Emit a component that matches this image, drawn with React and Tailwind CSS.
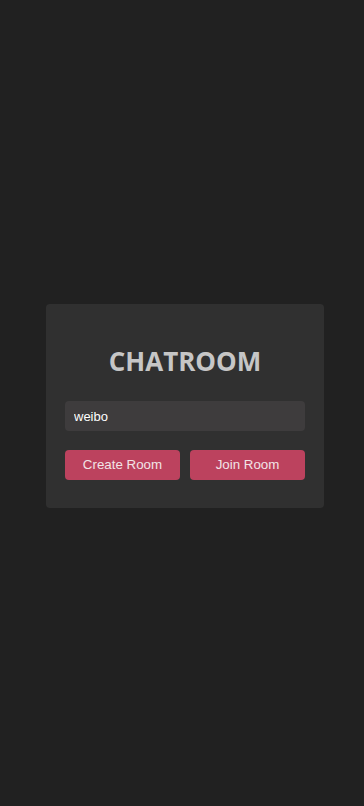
export default function App() {
  return (
    <div className="min-h-screen bg-[#212121] flex items-center justify-center pl-[6px] pt-[6px]">
      <div className="w-[278px] bg-[#303030] rounded-[4px] px-[19px] pt-[40px] pb-[28px]">
        <h1
          className="text-center text-[26px] leading-[34px] font-bold text-[#c6c6c6]"
          style={{ fontFamily: '"Open Sans", sans-serif' }}
        >
          CHATROOM
        </h1>
        <input
          defaultValue="weibo"
          className="mt-[23px] block w-full h-[30px] rounded-[4px] bg-[#3e3c3d] px-[9px] text-[13px] text-white outline-none"
          style={{ fontFamily: '"Liberation Sans", Arial, sans-serif' }}
        />
        <div className="mt-[19px] flex gap-[10px]" style={{ fontFamily: '"Liberation Sans", Arial, sans-serif' }}>
          <button className="flex-1 h-[30px] rounded-[4px] bg-[#bc425e] text-[13.33px] text-[#f2e4e6]">
            Create Room
          </button>
          <button className="flex-1 h-[30px] rounded-[4px] bg-[#bc425e] text-[13.33px] text-[#f2e4e6]">
            Join Room
          </button>
        </div>
      </div>
    </div>
  );
}
